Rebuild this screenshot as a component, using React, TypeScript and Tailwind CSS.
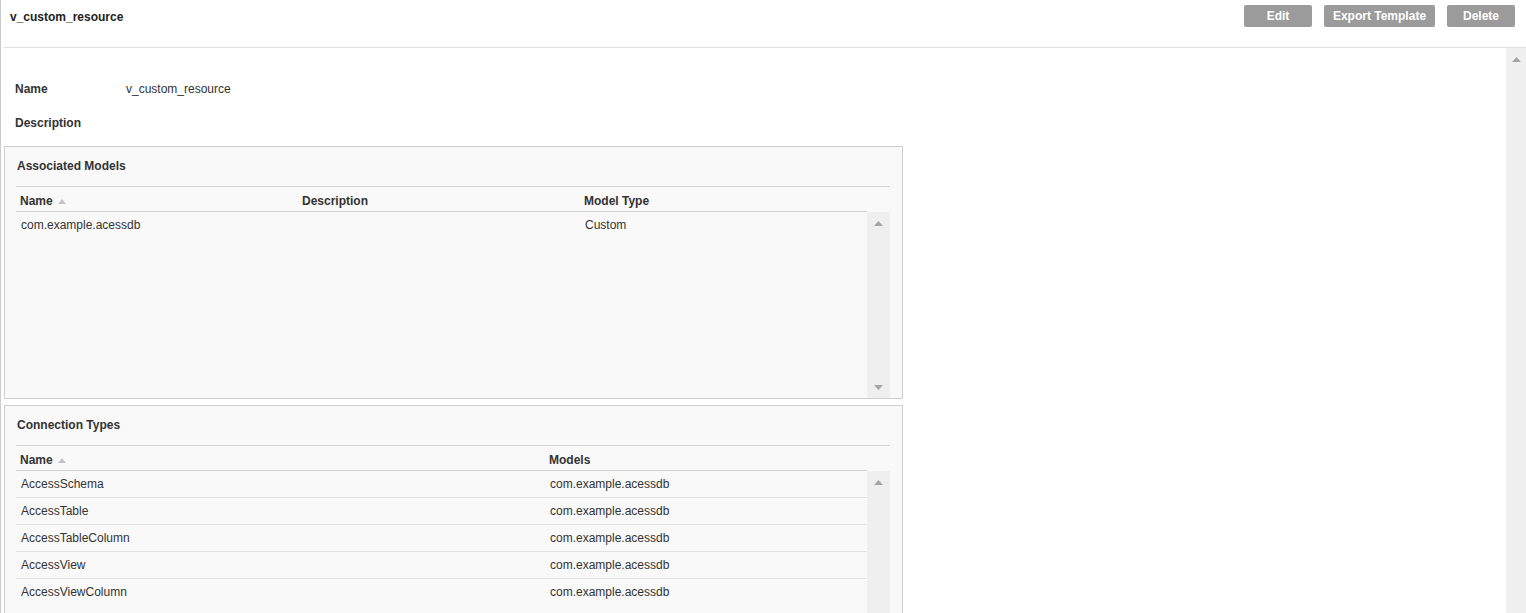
import type {FC} from 'react';

const font = "font-['Liberation_Sans',Arial,sans-serif]";

const UpArrow: FC = () => (
    <svg width="9" height="5" viewBox="0 0 9 5">
        <polygon points="0,5 4.5,0 9,5" fill="#a6a6a6" />
    </svg>
);

const DownArrow: FC = () => (
    <svg width="9" height="5" viewBox="0 0 9 5">
        <polygon points="0,0 9,0 4.5,5" fill="#a6a6a6" />
    </svg>
);

const SortIcon = () => (
    <svg width="8" height="5" viewBox="0 0 8 5" className="ml-[5px] inline-block">
        <polygon points="0,5 4,0 8,5" fill="#c4c4c4" />
    </svg>
);

type Column = {label: string; width: string; sort?: boolean};

const Panel: FC<{title: string; columns: Column[]; rows: string[][]}> = ({title, columns, rows}) => (
    <section className="w-[899px] border border-[#cfcfcf] bg-[#f9f9f9]">
        <h2 className="px-[12px] pt-[12px] text-[12px] font-bold leading-[14px] text-[#333]">{title}</h2>
        <div className="ml-[11px] mt-[13px] w-[874px] border-t border-[#d2d2d2]">
            {/* header */}
            <div className="flex h-[25px] w-[851px] border-b border-[#d2d2d2] pt-[4px] font-bold leading-[14px] text-[#333]">
                {columns.map((c) => (
                    <div key={c.label} className={`${c.width} flex items-center pl-[4px]`}>
                        {c.label}
                        {c.sort && <SortIcon />}
                    </div>
                ))}
            </div>
            {/* body */}
            <div className="flex h-[186px]">
                <div className="w-[851px]">
                    {rows.map((r, i) => (
                        <div
                            key={i}
                            className={`flex h-[27px] items-center text-[#333] ${i < rows.length - 1 ? 'border-b border-[#e2e2e2]' : 'pb-[1px]'}`}
                        >
                            {r.map((cell, j) => (
                                <div key={j} className={`${columns[j].width} pl-[5px]`}>
                                    {cell}
                                </div>
                            ))}
                        </div>
                    ))}
                </div>
                <div className="flex w-[23px] flex-col items-center justify-between bg-[#efefef] pb-[8px] pt-[9px]">
                    <UpArrow />
                    <DownArrow />
                </div>
            </div>
        </div>
    </section>
);

const App: FC = () => {
    const conn = ['AccessSchema', 'AccessTable', 'AccessTableColumn', 'AccessView', 'AccessViewColumn'];

    return (
        <div className={`${font} h-[613px] w-[1526px] overflow-hidden border-l border-[#cccccc] bg-white text-[12px] text-[#333]`}>
            <header className="ml-[3px] flex h-[48px] items-start justify-between border-b border-[#e0e0e0]">
                <h1 className="pl-[6px] pt-[10px] text-[12px] font-bold leading-[14px] text-[#222]">v_custom_resource</h1>
                <div className="mr-[11px] mt-[5px] flex gap-[12px]">
                    {[
                        ['Edit', 'w-[68px]'],
                        ['Export Template', 'w-[111px]'],
                        ['Delete', 'w-[68px]'],
                    ].map(([label, w]) => (
                        <button
                            key={label}
                            className={`${w} h-[22px] rounded-[2px] bg-[#9b9b9b] text-[12px] font-bold leading-[22px] text-white`}
                        >
                            {label}
                        </button>
                    ))}
                </div>
            </header>
            <div className="flex h-[565px]">
                <main className="flex-1 pl-[3px]">
                    <div className="pl-[11px] pt-[34px] leading-[14px]">
                        <div className="flex">
                            <span className="w-[111px] font-bold">Name</span>
                            <span>v_custom_resource</span>
                        </div>
                        <div className="mt-[20px] flex">
                            <span className="w-[111px] font-bold">Description</span>
                        </div>
                    </div>
                    <div className="mt-[16px] flex flex-col gap-[6px]">
                        <Panel
                            title="Associated Models"
                            columns={[
                                {label: 'Name', width: 'w-[282px]', sort: true},
                                {label: 'Description', width: 'w-[282px]'},
                                {label: 'Model Type', width: 'w-[287px]'},
                            ]}
                            rows={[['com.example.acessdb', '', 'Custom']]}
                        />
                        <Panel
                            title="Connection Types"
                            columns={[
                                {label: 'Name', width: 'w-[529px]', sort: true},
                                {label: 'Models', width: 'w-[322px]'},
                            ]}
                            rows={conn.map((c) => [c, 'com.example.acessdb'])}
                        />
                    </div>
                </main>
                <aside className="flex w-[20px] justify-center bg-[#f0f0f0] pt-[9px]">
                    <UpArrow />
                </aside>
            </div>
        </div>
    );
};

export default App;
